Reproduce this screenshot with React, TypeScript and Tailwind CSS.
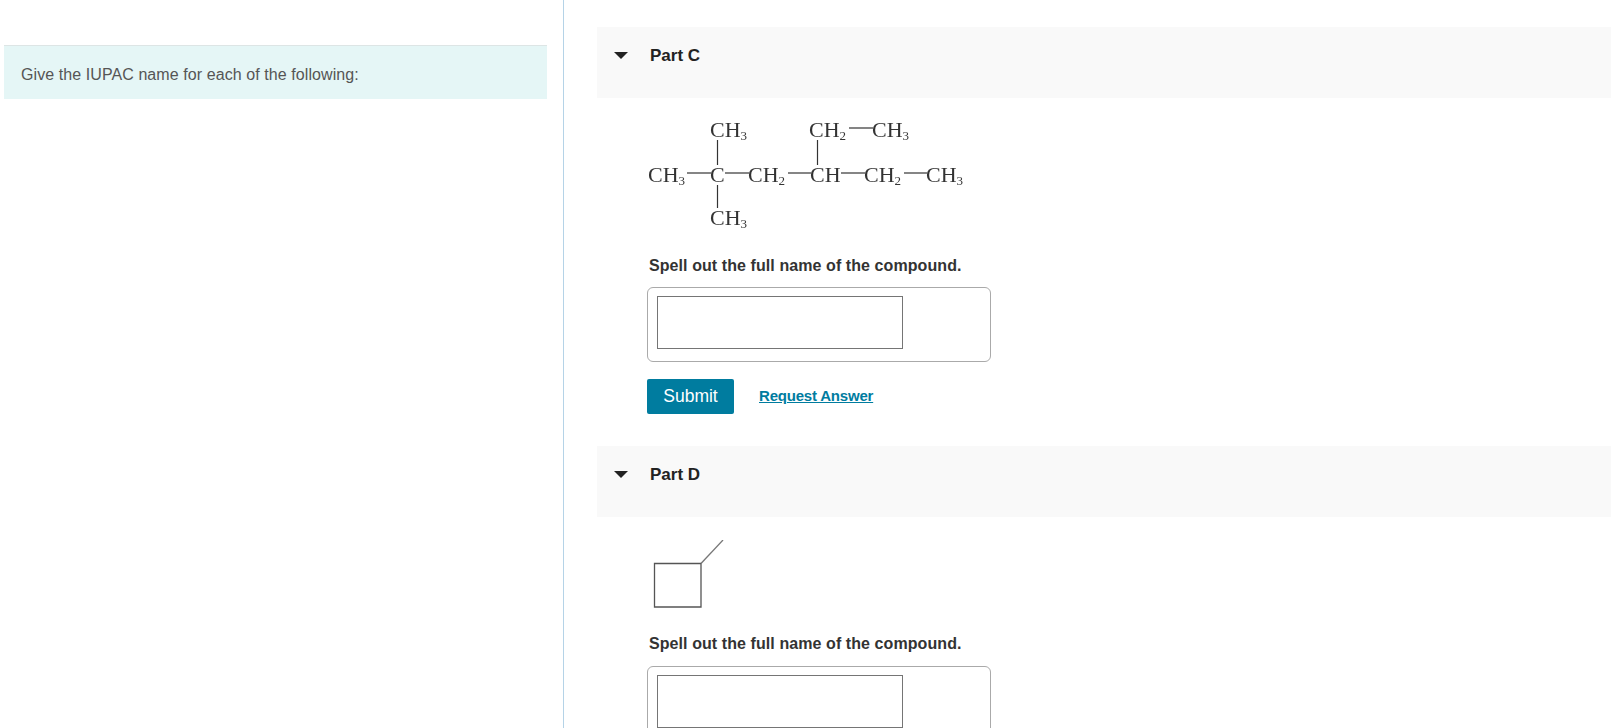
const arial = "font-['Liberation_Sans',Arial,sans-serif]";

const Caret = () => (
    <svg width="14" height="7" viewBox="0 0 14 7" className="absolute left-[17px] top-[25px]">
        <path d="M0 0H14L7 7Z" fill="#222" />
    </svg>
);

const PartHeader = ({ label }: { label: string }) => (
    <div className="relative h-[71px] bg-[#f9f9f9] pl-[53px] pt-[19px]">
        <Caret />
        <h3 className="text-[17px] leading-[20px] font-bold text-[#222]">{label}</h3>
    </div>
);

const AnswerBox = () => (
    <div className="w-[344px] h-[75px] shrink-0 rounded-[6px] border border-[#aaaaaa] pl-[9px] pt-[8px]">
        <input className="block w-[246px] h-[53px] border border-[#757575] bg-white" />
    </div>
);

const Prompt = () => (
    <p className="ml-[2px] text-[16px] leading-[18px] font-bold text-[#333] tracking-[0.08px]">
        Spell out the full name of the compound.
    </p>
);

const Chain = () => (
    <svg width="340" height="120" viewBox="0 0 340 120" className="block ml-[2px] blur-[0.35px]">
        <g fontFamily="'Liberation Serif', 'Times New Roman', serif" fontSize="22" fill="#333">
            <text x="61" y="23">CH<tspan fontSize="13" dy="3">3</tspan></text>
            <text x="160" y="23">CH<tspan fontSize="13" dy="3">2</tspan></text>
            <text x="223" y="23">CH<tspan fontSize="13" dy="3">3</tspan></text>
            <text x="-1" y="68">CH<tspan fontSize="13" dy="3">3</tspan></text>
            <text x="61" y="68">C</text>
            <text x="99" y="68">CH<tspan fontSize="13" dy="3">2</tspan></text>
            <text x="161" y="68">CH</text>
            <text x="215" y="68">CH<tspan fontSize="13" dy="3">2</tspan></text>
            <text x="277" y="68">CH<tspan fontSize="13" dy="3">3</tspan></text>
            <text x="61" y="111">CH<tspan fontSize="13" dy="3">3</tspan></text>
        </g>
        <g stroke="#333" strokeWidth="1.200" fill="none">
            <path d="M200 14H224" />
            <path d="M38 59H62" />
            <path d="M76 59H100" />
            <path d="M139 59H162" />
            <path d="M192 59H216" />
            <path d="M255 59H278" />
            <path d="M68.500 26V51" />
            <path d="M68.500 71V94" />
            <path d="M168.500 26V51" />
        </g>
    </svg>
);

export default function App() {
    return (
        <div className={`${arial} flex h-[728px] w-full overflow-hidden bg-white`}>
            <div className="w-[564px] shrink-0 border-r border-[#b5d3e7] pl-[4px] pr-[16px] pt-[45px]">
                <div className="h-[54px] border-t border-[#dde5e5] bg-[#e5f6f6] pl-[17px] pt-[19px]">
                    <p className="text-[16px] leading-[20px] tracking-[0.08px] text-[#555]">Give the IUPAC name for each of the following:</p>
                </div>
            </div>

            <div className="flex-1 pl-[33px] pt-[27px]">
                <PartHeader label="Part C" />
                <div className="pl-[50px] pt-[16px]">
                    <Chain />
                    <div className="mt-[23px]"><Prompt /></div>
                    <div className="mt-[12px]"><AnswerBox /></div>
                    <div className="mt-[17px] flex items-center gap-[25px]">
                        <button className="w-[87px] h-[35px] rounded-[2px] bg-[#007c9f] text-[17.5px] text-white">Submit</button>
                        <a className="text-[15px] font-bold tracking-[-0.2px] text-[#007c9f] underline">Request Answer</a>
                    </div>
                </div>

                <div className="mt-[32px]">
                    <PartHeader label="Part D" />
                </div>
                <div className="pl-[50px] pt-[23px]">
                    <svg width="80" height="70" viewBox="0 0 80 70" className="block">
                        <path d="M7.500 23.500H54V67H7.500Z" fill="none" stroke="#555" strokeWidth="1.300" />
                        <path d="M54 23.500L76 0" fill="none" stroke="#777" strokeWidth="1.300" />
                    </svg>
                    <div className="mt-[25px]"><Prompt /></div>
                    <div className="mt-[13px]"><AnswerBox /></div>
                </div>
            </div>
        </div>
    );
}
